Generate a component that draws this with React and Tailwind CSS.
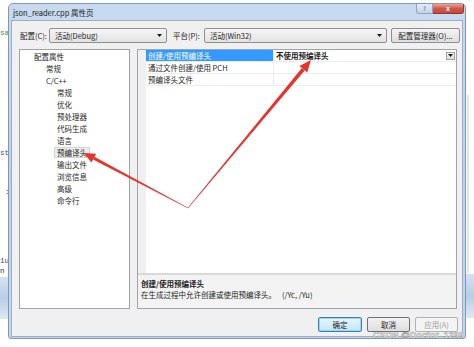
import React from "react";

// --- tree + grid data ---
const treeItems = [
  { label: "配置属性", indent: 14 },
  { label: "常规", indent: 26 },
  { label: "C/C++", indent: 26 },
  { label: "常规", indent: 37 },
  { label: "优化", indent: 37 },
  { label: "预处理器", indent: 37 },
  { label: "代码生成", indent: 37 },
  { label: "语言", indent: 37 },
  { label: "预编译头", indent: 37, selected: true },
  { label: "输出文件", indent: 37 },
  { label: "浏览信息", indent: 37 },
  { label: "高级", indent: 37 },
  { label: "命令行", indent: 37 },
];

const gridRows = [
  { name: "创建/使用预编译头", value: "不使用预编译头", active: true },
  { name: "通过文件创建/使用 PCH", value: "" },
  { name: "预编译头文件", value: "" },
];

function arrowShape(tx, ty, hx, hy, w0, w1, hl, hw) {
  const dx = hx - tx;
  const dy = hy - ty;
  const len = Math.hypot(dx, dy);
  const ux = dx / len;
  const uy = dy / len;
  const nx = -uy;
  const ny = ux;
  const bx = hx - ux * hl;
  const by = hy - uy * hl;
  const p = (pts) => pts.map(([x, y]) => `${x.toFixed(1)},${y.toFixed(1)}`).join(" ");
  return {
    shaft: p([
      [tx + (nx * w0) / 2, ty + (ny * w0) / 2],
      [bx + (nx * w1) / 2, by + (ny * w1) / 2],
      [bx - (nx * w1) / 2, by - (ny * w1) / 2],
      [tx - (nx * w0) / 2, ty - (ny * w0) / 2],
    ]),
    head: p([
      [hx, hy],
      [bx + (nx * hw) / 2, by + (ny * hw) / 2],
      [bx - (nx * hw) / 2, by - (ny * hw) / 2],
    ]),
  };
}

function DownTri() {
  return (
    <svg width="5" height="3" viewBox="0 0 5 3">
      <path d="M0 0h5L2.5 3z" fill="#1a1a1a" />
    </svg>
  );
}

function Combo({ text, width }) {
  return (
    <div
      className={`${width} h-[15px] flex items-center justify-between pl-[5px] pr-[4px] border border-[#8e8f8f] rounded-[2px] bg-gradient-to-b from-[#f5f5f5] to-[#e3e3e3] text-[7.5px]`}
    >
      <span>{text}</span>
      <DownTri />
    </div>
  );
}

export default function App() {
  const left = arrowShape(188, 208, 84, 153, 0.6, 3, 11, 10);
  const right = arrowShape(188, 208, 311, 60, 0.6, 3.6, 12, 10);

  return (
    <div className="relative w-[474px] h-[347px] overflow-hidden bg-white text-[#1e1e1e] font-['Noto_Sans_CJK_SC',sans-serif]">
      {/* --- desktop behind the dialog (code editor fragments) --- */}
      <span className="absolute left-0 top-[30px] text-[7.5px] leading-none text-[#3a9a4a] font-['Liberation_Mono',monospace]">sa</span>
      <span className="absolute left-0 top-[150px] text-[7.5px] leading-none text-[#3b3bd0] font-['Liberation_Mono',monospace]">st</span>
      <span className="absolute left-[5px] top-[189px] text-[7.5px] leading-none text-[#333] font-['Liberation_Mono',monospace]">:</span>
      <span className="absolute left-0 top-[258px] text-[7.5px] leading-none text-[#3b3b9a] font-['Liberation_Mono',monospace]">1u</span>
      <span className="absolute left-0 top-[268px] text-[7.5px] leading-none text-[#333] font-['Liberation_Mono',monospace]">n</span>
      <div className="absolute left-0 top-[277px] w-[9px] h-[42px] bg-gradient-to-b from-[#d5e2f1] via-[#b9cde4] to-[#dfe8f3]" />
      <div className="absolute right-0 top-[274px] w-[9px] h-[44px] bg-gradient-to-b from-[#d5e2f1] via-[#b9cde4] to-[#dfe8f3]" />
      <div className="absolute right-[5px] top-[95px] w-[2px] h-[178px] bg-[#dbe5f1]" />

      {/* --- dialog window --- */}
      <div className="absolute left-[8px] top-[3px] w-[458px] h-[336px] flex flex-col rounded-t-[5px] rounded-b-[3px] border border-[#7d98b9] bg-gradient-to-b from-[#c8daef] via-[#bdd2ea] to-[#c3d6ec]">
        {/* title bar */}
        <div className="h-[16px] flex items-start justify-between pl-[4px] pr-[1px]">
          <span className="text-[7.5px] leading-[18px] text-[#1b1b1b]">json_reader.cpp 属性页</span>
          <div className="flex">
            <div className="w-[17px] h-[10px] flex items-center justify-center rounded-bl-[3px] border border-t-0 border-[#8ea4bf] bg-gradient-to-b from-[#e4ecf6] to-[#c2d3e8] text-[6px] leading-none text-[#44566e]">
              ?
            </div>
            <div className="w-[31px] h-[10px] flex items-center justify-center rounded-br-[3px] border border-t-0 border-l-0 border-[#8d3a34] bg-gradient-to-b from-[#e8a49c] via-[#d2574b] to-[#c8463a] text-[7px] leading-none text-white font-bold">
              x
            </div>
          </div>
        </div>

        {/* client area */}
        <div className="flex-1 mx-[2px] mb-[1px] border border-[#98aecb] bg-[#f0f0f0] flex flex-col">
          {/* configuration row */}
          <div className="flex items-center pt-[7px] pl-[8px] text-[7.5px]">
            <span className="w-[29px]">配置(C):</span>
            <Combo text="活动(Debug)" width="w-[118px]" />
            <span className="ml-[6px] w-[31px]">平台(P):</span>
            <Combo text="活动(Win32)" width="w-[183px]" />
            <div className="ml-[4px] w-[69px] h-[15px] flex items-center justify-center border border-[#8e8f8f] rounded-[2px] bg-gradient-to-b from-[#f4f4f4] to-[#dedede]">
              配置管理器(O)...
            </div>
          </div>

          {/* tree + property grid */}
          <div className="flex mt-[6px] h-[260px]">
            <div className="ml-[7px] w-[111px] border border-[#9fa3aa] bg-white text-[7.5px]">
              {treeItems.map((item, i) => (
                <div key={i} className="h-[12px] flex items-center" style={{ paddingLeft: item.indent - 2 }}>
                  <span
                    className={`px-[2px] leading-[9px] ${
                      item.selected ? "bg-[#ececec] border border-[#d4d4d4] -ml-px" : ""
                    }`}
                  >
                    {item.label}
                  </span>
                </div>
              ))}
            </div>

            <div className="ml-[7px] w-[320px] border border-[#9fa3aa] bg-white flex flex-col">
              <div className="h-[223px] flex">
                <div className="w-[8px] bg-[#f0f0f0]" />
                <div className="flex-1 flex flex-col">
                  {gridRows.map((row, i) => (
                    <div key={i} className="h-[12px] flex text-[7.5px] border-b border-[#ededed]">
                      <div
                        className={`w-[128px] pl-[2px] flex items-center border-r border-[#ededed] ${
                          row.active ? "bg-[#3399ff] text-white" : ""
                        }`}
                      >
                        {row.name}
                      </div>
                      <div className="flex-1 flex items-center justify-between pl-[2px] pr-[1px]">
                        <span className="font-bold">{row.value}</span>
                        {row.active && (
                          <div className="w-[9px] h-[8px] flex items-center justify-center border border-[#a0a0a0] bg-gradient-to-b from-[#f6f6f6] to-[#dcdcdc]">
                            <DownTri />
                          </div>
                        )}
                      </div>
                    </div>
                  ))}
                </div>
              </div>
              <div className="flex-1 border-t-2 border-[#d9d9d9] bg-[#f3f3f3] pl-[3px] pt-[3px] text-[7.5px] leading-[11px]">
                <div className="font-bold">创建/使用预编译头</div>
                <div className="flex">
                  <span className="w-[141px]">在生成过程中允许创建或使用预编译头。</span>
                  <span>(/Yc, /Yu)</span>
                </div>
              </div>
            </div>
          </div>

          {/* dialog buttons */}
          <div className="flex justify-end gap-[5px] pr-[4px] mt-[8px] text-[7.5px]">
            <div className="w-[44px] h-[15px] flex items-center justify-center rounded-[2px] border border-[#3c7fb1] bg-gradient-to-b from-[#eaf6fd] to-[#bee6fd] shadow-[inset_0_0_0_1px_#9cd4f4]">
              确定
            </div>
            <div className="w-[43px] h-[15px] flex items-center justify-center rounded-[2px] border border-[#707070] bg-gradient-to-b from-[#f2f2f2] to-[#dddddd]">
              取消
            </div>
            <div className="w-[43px] h-[15px] flex items-center justify-center rounded-[2px] border border-[#adb2b5] bg-[#f4f4f4] text-[#a0a0a0]">
              应用(A)
            </div>
          </div>
        </div>
      </div>

      {/* --- red annotation arrows --- */}
      <svg className="absolute inset-0 pointer-events-none" width="474" height="347" viewBox="0 0 474 347">
        <polygon points={left.shaft} fill="#e8322c" />
        <polygon points={left.head} fill="#e8322c" />
        <polygon points={right.shaft} fill="#e8322c" />
        <polygon points={right.head} fill="#e8322c" />
      </svg>

      {/* watermark */}
      <span className="absolute left-[373px] top-[331px] text-[9px] leading-none font-bold text-white [-webkit-text-stroke:0.5px_#9c9c9c] font-['Liberation_Sans',sans-serif]">
        CSDN @Doctor_1299
      </span>
    </div>
  );
}
